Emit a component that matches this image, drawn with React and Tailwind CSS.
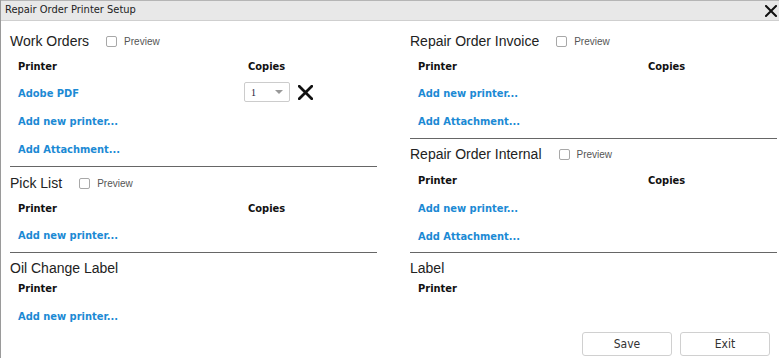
import React from 'react';

const ui = { fontFamily: '"DejaVu Sans Condensed", "DejaVu Sans", sans-serif' };
const arial = { fontFamily: '"Liberation Sans", Arial, sans-serif' };

function CloseIcon({ size = 12, stroke = 2 }) {
  return (
    <svg width={size} height={size} viewBox="0 0 12 12" className="block">
      <path d="M1 1 L11 11 M11 1 L1 11" stroke="#111" strokeWidth={stroke} strokeLinecap="square" />
    </svg>
  );
}

function Heading({ title, preview, className = '' }) {
  return (
    <div className={`flex items-center h-[22px] ${className}`}>
      <span className="text-[14px] text-[#222] leading-none" style={arial}>{title}</span>
      {preview && (
        <label className="flex items-center ml-[17px] pt-[1px]">
          <span className="w-[11px] h-[11px] border border-[#a8a8a8] rounded-[2px] bg-white" />
          <span className="ml-[7px] text-[10px] text-[#555]" style={arial}>Preview</span>
        </label>
      )}
    </div>
  );
}

function HeaderRow({ copies = true, h = 'h-[26px]' }) {
  return (
    <div className={`flex items-center pl-[8px] pt-[4px] text-[11px] font-bold text-[#111] ${h}`} style={ui}>
      <span className="w-[230px]">Printer</span>
      {copies && <span>Copies</span>}
    </div>
  );
}

function LinkRow({ text, className = '' }) {
  return (
    <div className={`flex items-center h-[28px] pl-[8px] pt-[4px] ${className}`}>
      <span className="text-[11px] font-bold text-[#1c8ad4]" style={ui}>{text}</span>
    </div>
  );
}

function Divider({ className = '' }) {
  return <div className={`h-px bg-[#666] ${className}`} />;
}

export default function App() {
  return (
    <div className="w-[779px] h-[358px] overflow-hidden bg-white border-l border-[#9a9a9a] flex flex-col">
      <div className="h-[21px] shrink-0 bg-[#e8e8e8] border-b border-[#cfcfcf] border-t border-t-[#b5b5b5] flex items-center justify-between pl-[4px] pr-[2px]">
        <span className="text-[11px] text-[#222]" style={ui}>Repair Order Printer Setup</span>
        <CloseIcon size={12} stroke={2} />
      </div>

      <div className="flex pl-[9px] pt-[9px]">
        <div className="w-[367px]">
          <Heading title="Work Orders" preview />
          <HeaderRow />
          <div className="flex items-center h-[28px] pl-[8px]">
            <span className="w-[226px] pt-[4px] text-[11px] font-bold text-[#1c8ad4]" style={ui}>Adobe PDF</span>
            <div className="w-[46px] h-[20px] border border-[#cccccc] rounded-[2px] flex items-center justify-between pl-[6px] pr-[6px]">
              <span className="text-[10px] text-[#1a1a3a]" style={{ fontFamily: '"Liberation Serif", serif' }}>1</span>
              <span className="w-0 h-0 border-l-[4px] border-r-[4px] border-t-[4px] border-l-transparent border-r-transparent border-t-[#999]" />
            </div>
            <span className="ml-[8px]"><CloseIcon size={15} stroke={2.2} /></span>
          </div>
          <LinkRow text="Add new printer..." />
          <LinkRow text="Add Attachment..." />
          <Divider className="mt-[4px]" />

          <Heading title="Pick List" preview className="mt-[5px]" />
          <HeaderRow />
          <LinkRow text="Add new printer..." />
          <Divider className="mt-[4px]" />

          <Heading title="Oil Change Label" className="mt-[4px]" />
          <HeaderRow copies={false} h="h-[16px]" />
          <LinkRow text="Add new printer..." className="mt-[6px]" />
        </div>

        <div className="w-[367px] ml-[33px]">
          <Heading title="Repair Order Invoice" preview />
          <HeaderRow />
          <LinkRow text="Add new printer..." />
          <LinkRow text="Add Attachment..." />
          <Divider className="mt-[4px]" />

          <Heading title="Repair Order Internal" preview className="mt-[4px]" />
          <HeaderRow h="h-[28px]" />
          <LinkRow text="Add new printer..." />
          <LinkRow text="Add Attachment..." />
          <Divider className="mt-[3px]" />

          <Heading title="Label" className="mt-[4px]" />
          <HeaderRow copies={false} h="h-[16px]" />
        </div>
      </div>

      <div className="flex justify-end gap-[8px] pr-[9px] mt-[3px]">
        <button className="w-[90px] h-[24px] border border-[#d0d0d0] rounded-[3px] bg-white text-[12px] text-[#333]" style={ui}>Save</button>
        <button className="w-[90px] h-[24px] border border-[#d0d0d0] rounded-[3px] bg-white text-[12px] text-[#333]" style={ui}>Exit</button>
      </div>
    </div>
  );
}
